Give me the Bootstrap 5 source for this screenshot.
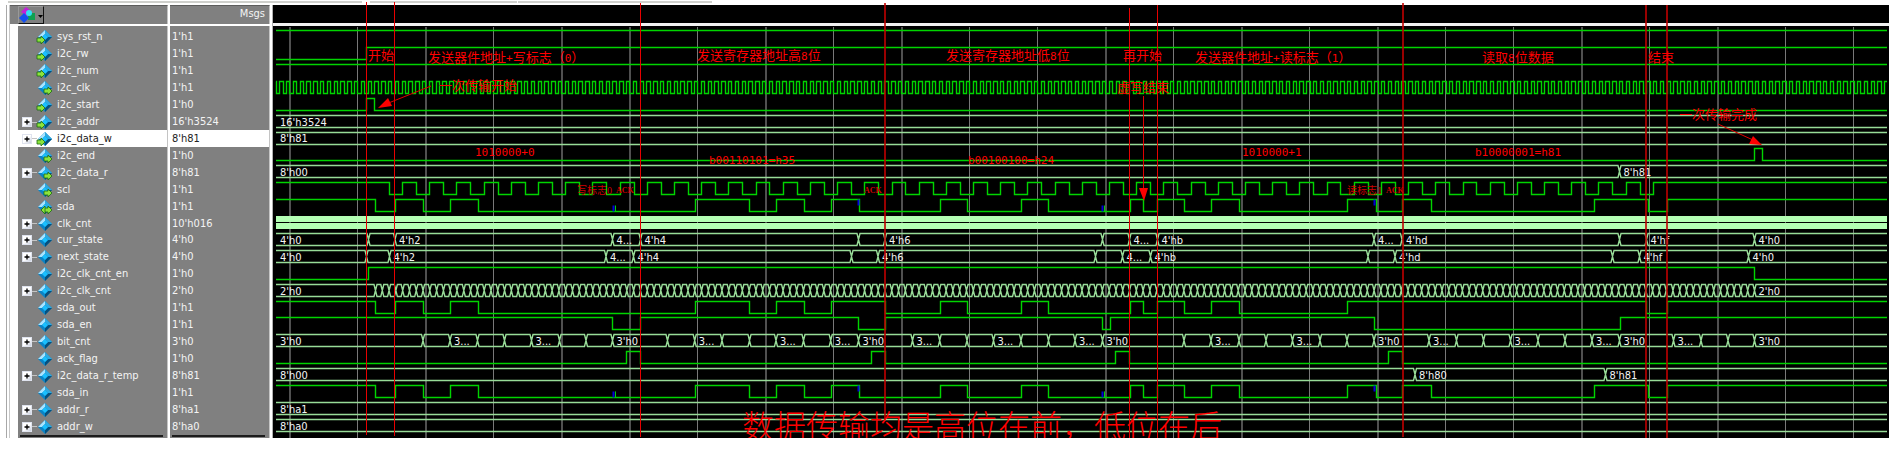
<!DOCTYPE html>
<html lang="zh-CN">
<head>
<meta charset="utf-8">
<meta name="viewport" content="width=device-width, initial-scale=1">
<title>Wave</title>
<link rel="stylesheet" href="https://cdn.jsdelivr.net/npm/bootstrap@5.3.0/dist/css/bootstrap.min.css">
<style>
  body { background: #fff; font-family: "DejaVu Sans Condensed", "DejaVu Sans", "Noto Sans CJK SC", sans-serif; font-size: 11px; line-height: 16px; }
  .tabstrip { width: 38%; padding: 1px 8px 0 8px; }
  .tabstrip span { background: #cfd0cc; height: 2px; }
  .tab-a { flex: 354; margin-right: 8px; } .tab-b { flex: 148; margin-right: 1px; } .tab-c { flex: 194; }
  .wave-window { margin: 2px 6px 0; border-left: 1px solid #a8a8a8; }
  .names { width: 161px; margin-left: 2px; border-left: 1px solid #c8c8c8; }
  .vals { width: 102px; }
  .pane-head { height: 19px; background: #808080; color: #f4f4f4; border-top: 1px solid #5c5c5c; margin-bottom: 2px; }
  .names .pane-head, .names .pane-body, .vals .pane-head, .vals .pane-body { border-right: 1px solid #c4c4c4; margin-right: 2px; }
  .names .pane-body { margin-left: 8px; }
  .pane-body { background: #808080; color: #f4f4f4; height: 412px; padding-top: 3px; }
  .sig-list { display: grid; grid-template-rows: repeat(24, 1fr); height: 406px; }
  .sig-list li { white-space: nowrap; overflow: hidden; }
  .sig-list li.chosen { background: #fff; color: #222; }
  .names li { padding-left: 4px; }
  .gem { width: 16px; height: 16px; overflow: visible; }
  .vals li { padding-left: 2px; }
  .expander { width: 10px; height: 10px; background: linear-gradient(135deg, #fff 50%, #c9d0e0); border: 1px solid #dfe3ee; color: #000; }
  .expander svg { width: 8px; height: 8px; display: block; }
  .stem { width: 5px; height: 1px; background: #c4c4c4; }
  .no-stem { width: 15px; }
  .end-mark { height: 2px; background: #1c1c1c; margin: 0 4px 0 2px; }
  .menu-btn { width: 26px; height: 18px; margin-left: 8px; background: #808080; border: 1px solid #999; border-right-color: #111; border-bottom-color: #111; }
  .scope { background: #000; height: 433px; border-left: 1px solid #b0b0b0; min-width: 0; }
  .scope-line { height: 3px; top: 18px; background: #f2f2f2; }
  .plot-area { width: 100%; height: 440px; overflow: visible; }
  .label-text { fill: #f4f4f4; font-size: 11px; }
  .note-text { fill: #ff0000; font-family: "DejaVu Sans Mono", "Noto Sans CJK SC", sans-serif; font-size: 11px; }
  .note-text .han { font-family: "Noto Sans CJK SC", sans-serif; font-size: 13px; }
  .note-small { fill: #d00000; font-family: "Liberation Serif", "Noto Sans CJK SC", serif; font-size: 10px; }
  .note-ack { font-size: 8px; font-weight: 700; }
  .note-big { fill: #ff0000; font-family: "Noto Sans CJK SC", sans-serif; font-weight: 300; font-size: 32px; }
</style>
</head>
<body>
<svg width="0" height="0" class="position-absolute" aria-hidden="true">
  <defs>
    <g id="gem">
      <path d="M8 1 15 8 8 15 1 8z" fill="#0a84c6"/>
      <path d="M8 1 1 8h4l3-3z" fill="#a9e4ff"/>
      <path d="M8 1 15 8h-4L8 5z" fill="#2fa9e0"/>
      <path d="M15 8 8 15v-4l3-3z" fill="#05507e"/>
      <path d="M8 5 11 8 8 11 5 8z" fill="#19c0ff"/>
    </g>
    <path id="arrow" d="M0 2h4V0l4 4-4 4V6H0z" fill="#8be43c" stroke="#1d6b10" stroke-width=".8"/>
  </defs>
</svg>

<div class="tabstrip d-flex">
  <span class="tab-a"></span><span class="tab-b"></span><span class="tab-c"></span>
</div>
<main>
  <div class="wave-window d-flex position-relative">
    <section class="names flex-shrink-0" aria-label="Signals">
      <div class="pane-head">
        <button type="button" class="menu-btn p-0 d-flex align-items-center" aria-label="Format">
          <svg viewBox="0 0 24 16" width="24" height="16">
            <path d="M2 5 7 0l5 4-4 5z" fill="#c31fd8"/><path d="M9 6h7v7H9z" fill="#10a050"/>
            <path d="M5 6 10 11 5 16 0 11z" fill="#1450f0"/><circle cx="10" cy="6" r="3" fill="#32e0f4"/>
            <path d="M19 8h5l-2.500 3z" fill="#000"/>
          </svg>
        </button>
      </div>
      <div class="pane-body">
        <ul class="sig-list list-unstyled mb-0" id="names"></ul>
        <div class="end-mark"></div>
      </div>
    </section>
    <section class="vals flex-shrink-0" aria-label="Values">
      <div class="pane-head text-end pe-1">Msgs</div>
      <div class="pane-body">
        <ul class="sig-list list-unstyled mb-0" id="vals"></ul>
        <div class="end-mark"></div>
      </div>
    </section>
    <section class="scope flex-grow-1 position-relative" aria-label="Waveforms">
      <div class="scope-line position-absolute start-0 end-0"></div>
      <svg class="plot-area position-absolute top-0 start-0" id="plot"></svg>
    </section>
  </div>
</main>

<script>
// Signals: name, value, icon kind, expandable, trace
const sda = [1, 375.5, 395, 423.5, 450, 478, 695, 749, 776, 804, 831, 859, 940, 967, 1021, 1048, 1130, 1143.5, 1157.5, 1184, 1211, 1239, 1347, 1376, 1402, 1431, 1594, 1648, 1667];
const scl = [1];
for (let k = 0; k < 47; k++) scl.push(389.3 + 27.19 * k, 402.6 + 27.19 * k);
const clk = [1];
for (let x = 276.4, k = 0; x < 1886; k++, x += 3.4) clk.push(x);
const cnt = [[0, "2'h0"]];
for (let k = 0; k < 203; k++) cnt.push([375.5 + 6.793 * k, ""]);
cnt.push([1754.5, "2'h0"]);
const D = "3...", Z = "3'h0";
const bits = [[0, Z], [423, ""], [450, D], [477.5, ""], [504.5, ""], [531.5, D], [559.5, ""], [586, ""], [612.5, Z], [667.5, ""], [694.7, D], [722, ""], [749.5, ""], [776, D], [803.5, ""], [830.7, D], [858.5, Z], [912.5, D], [939.7, ""], [967, ""], [993.5, D], [1021, ""], [1048.5, ""], [1075, D], [1102.5, Z], [1184, ""], [1211, D], [1239, ""], [1266, ""], [1292.5, D], [1320, ""], [1347, ""], [1374, Z], [1429, D], [1456.5, ""], [1483.5, ""], [1510.5, D], [1538, ""], [1565, ""], [1592, D], [1619.5, Z], [1673.5, D], [1701, ""], [1728, ""], [1754.5, Z]];
const signals = [
  ["sys_rst_n", "1'h1", "in", 0, [1]],
  ["i2c_rw", "1'h1", "in", 0, [0, 366.5]],
  ["i2c_num", "1'h1", "in", 0, [1]],
  ["i2c_clk", "1'h1", "out", 0, clk],
  ["i2c_start", "1'h0", "in", 0, [0, 366.5, 374.5]],
  ["i2c_addr", "16'h3524", "in", 1, [[0, "16'h3524"]]],
  ["i2c_data_w", "8'h81", "in", 1, [[0, "8'h81"]]],
  ["i2c_end", "1'h0", "out", 0, [0, 1754.5, 1762]],
  ["i2c_data_r", "8'h81", "out", 1, [[0, "8'h00"], [1619.5, "8'h81"]]],
  ["scl", "1'h1", "out", 0, scl],
  ["sda", "1'h1", "both", 0, sda],
  ["clk_cnt", "10'h016", "", 1, "solid"],
  ["cur_state", "4'h0", "", 1, [[0, "4'h0"], [368.5, ""], [395, "4'h2"], [612.5, "4..."], [640.5, "4'h4"], [858.5, ""], [885, "4'h6"], [1102.5, ""], [1129.5, "4..."], [1157.5, "4'hb"], [1374, "4..."], [1402, "4'hd"], [1619.5, ""], [1646.5, "4'hf"], [1754.5, "4'h0"]]],
  ["next_state", "4'h0", "", 1, [[0, "4'h0"], [366.5, ""], [389.5, "4'h2"], [606, "4..."], [633.5, "4'h4"], [851.5, ""], [878, "4'h6"], [1095.5, ""], [1122.5, "4..."], [1150.5, "4'hb"], [1368, ""], [1395, "4'hd"], [1612.5, ""], [1639.5, "4'hf"], [1748.5, "4'h0"]]],
  ["i2c_clk_cnt_en", "1'h0", "", 0, [0, 368.5, 1754.5]],
  ["i2c_clk_cnt", "2'h0", "", 1, cnt],
  ["sda_out", "1'h1", "", 0, [1, 375.5, 395, 423.5, 450, 478, 695, 749, 776, 804, 831, 885, 940, 967, 1021, 1048, 1130, 1143.5, 1157.5, 1184, 1211, 1239, 1347, 1646, 1667]],
  ["sda_en", "1'h1", "", 0, [1, 612.5, 640.5, 858.5, 885, 1102.5, 1110, 1374, 1620]],
  ["bit_cnt", "3'h0", "", 1, bits],
  ["ack_flag", "1'h0", "", 0, [0, 626.5, 640.5, 871.5, 885, 1115.5, 1129.5, 1388.5, 1402]],
  ["i2c_data_r_temp", "8'h81", "", 1, [[0, "8'h00"], [1415, "8'h80"], [1605.5, "8'h81"]]],
  ["sda_in", "1'h1", "", 0, sda],
  ["addr_r", "8'ha1", "", 1, [[0, "8'ha1"]]],
  ["addr_w", "8'ha0", "", 1, [[0, "8'ha0"]]]
];

// Plot origin: time axis starts at T0, traces run to the right edge of the scope
const T0 = 273, Y0 = 5, START = 276;
const plot = document.getElementById("plot");
const END = plot.getBoundingClientRect().width + T0 - 2;
const snap = v => Math.floor(v) + 0.5;
const badges = {
  in: '<use href="#arrow" x="0" y="7"/>',
  out: '<use href="#arrow" x="7" y="7"/>',
  both: '<use href="#arrow" x="7" y="7"/><path d="M8 7v8l-4-4z" fill="#8be43c" stroke="#1d6b10" stroke-width=".8"/>',
  "": ""
};
let names = "", vals = "", s = "";

for (let k = 0; k < 40; k++) {
  const x = 290 + 67.98 * k;
  if (x > END) break;
  const wide = [0, 2, 4, 5, 7, 9, 12, 14, 16, 19, 21].includes(k);
  s += wide ? `<path d="M${Math.round(x)} 27V438" stroke="#505050" stroke-width="2"/>`
            : `<path d="M${snap(x)} 27V438" stroke="#787878"/>`;
}

signals.forEach(([name, value, kind, more, trace], i) => {
  const chosen = name === "i2c_data_w" ? " chosen" : "";
  const lead = more
    ? `<button type="button" class="expander p-0 flex-shrink-0" aria-label="Expand ${name}"><svg viewBox="0 0 8 8"><path d="M1.5 4h5M4 1.5v5" stroke="#000" stroke-width="1.3"/></svg></button><span class="stem flex-shrink-0"></span>`
    : '<span class="no-stem flex-shrink-0"></span>';
  names += `<li class="d-flex align-items-center${chosen}">${lead}<svg class="gem flex-shrink-0" viewBox="0 0 16 16" aria-hidden="true"><use href="#gem"/>${badges[kind]}</svg><span class="ms-1">${name}</span></li>`;
  vals += `<li class="d-flex align-items-center${chosen}">${value}</li>`;

  const c = 36.5 + 16.9 * i, hi = snap(c - 5.8), lo = snap(c + 6.2);
  if (trace === "solid") {
    s += `<path d="M${START} 216H${END}V222H${START}zM${START} 223H${END}V229H${START}z" fill="#b4ffb4"/>`;
  } else if (Array.isArray(trace[0])) {
    let top = `M${START} ${hi}`, bot = `M${START} ${lo}`;
    trace.forEach(([x, text], n) => {
      if (n) {
        top += `H${x - 1.5}L${x + 1.5} ${lo}`;
        bot += `H${x - 1.5}L${x + 1.5} ${hi}`;
        [top, bot] = [bot, top];
      }
      if (text) s += `<text class="label-text" x="${n ? x + 4 : 280}" y="${Math.round(c + 4.5)}">${text}</text>`;
    });
    s += `<path d="${top}H${END}${bot}H${END}" fill="none" stroke="#98dc98" stroke-width="1.4"/>`;
  } else {
    let level = trace[0], d = `M${START} ${level ? hi : lo}`;
    trace.slice(1).forEach(x => { level = 1 - level; d += `H${snap(x)}V${level ? hi : lo}`; });
    s += `<path d="${d}H${END}" fill="none" stroke="#00d400" stroke-width="1.4"/>`;
    if (trace === sda) {
      const m = c;
      s += `<path d="M613.5 ${lo}V${m}M1102.5 ${lo}V${m}M858.5 ${hi}V${m}M1374.5 ${hi}V${m}" stroke="#0000d8" stroke-width="2"/>`;
      s += `<path d="M615.5 ${lo}V${m}M1104.5 ${lo}V${m}" stroke="#00d400"/>`;
    }
  }
});

// Cursors and notes
[[366.5, 2, 435], [394.5, 2, 436], [640.5, 3, 437], [1129.5, 8, 442], [1157.5, 5, 438]]
  .forEach(([x, a, b]) => s += `<path d="M${x} ${a}V${b}" stroke="#e80000"/>`);
[[885, 3, 420], [1403, 3, 437], [1646, 5, 438], [1667, 5, 438]]
  .forEach(([x, a, b]) => s += `<path d="M${x} ${a}V${b}" stroke="#c00000" stroke-opacity=".8" stroke-width="2"/>`);
s += `<g stroke="#e00000" fill="#ff0000"><path d="M431 86 386 104M1143.5 96V190M1718 124 1753 140"/>
  <path stroke="none" d="M378 108 388 98 392 106zM1139 188h9l-4 13zM1762 145 1753 136 1749 144z"/></g>`;
const h = t => `<tspan class="han">${t}</tspan>`;
[[368, 60, h("开始")], [428, 62, h("发送器件地址") + "+" + h("写标志（") + "0" + h("）")],
 [697, 60, h("发送寄存器地址高") + "8" + h("位")], [946, 60, h("发送寄存器地址低") + "8" + h("位")],
 [1123, 60, h("再开始")], [1195, 62, h("发送器件地址") + "+" + h("读标志（") + "1" + h("）")],
 [1482, 62, h("读取") + "8" + h("位数据")], [1648, 62, h("结束")],
 [439, 90, h("一次传输开始")], [1117, 92, h("虚写结束")], [1679, 119, h("一次传输完成")],
 [475, 156, "1010000+0"], [709, 164, "b00110101=h35"], [968, 164, "b00100100=h24"],
 [1242, 156, "1010000+1"], [1475, 156, "b10000001=h81"]]
  .forEach(([x, y, t]) => s += `<text class="note-text" x="${x}" y="${y}">${t}</text>`);
[[577, 194, "写标志0"], [1347, 194, "读标志1"]]
  .forEach(([x, y, t]) => s += `<text class="note-small" x="${x}" y="${y}">${t}</text>`);
[616, 864, 1386].forEach(x => s += `<text class="note-small note-ack" x="${x}" y="193">ACK</text>`);
s += `<text class="note-big" x="742" y="438">数据传输均是高位在前，低位在后</text>`;

document.getElementById("names").innerHTML = names;
document.getElementById("vals").innerHTML = vals;
plot.innerHTML = `<g transform="translate(${-T0} ${-Y0})">${s}</g>`;
</script>
<script src="https://cdn.jsdelivr.net/npm/bootstrap@5.3.0/dist/js/bootstrap.bundle.min.js"></script>
</body>
</html>
